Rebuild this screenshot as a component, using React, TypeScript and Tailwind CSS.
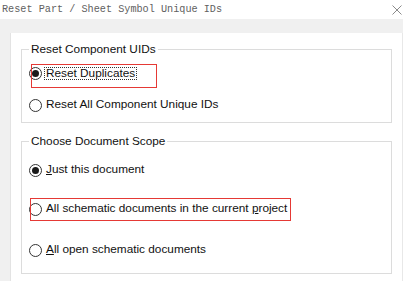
import React from "react";

type Opt = {
  label: React.ReactNode;
  checked?: boolean;
  focus?: boolean;
};

function Radio({ checked }: { checked?: boolean }) {
  return (
    <span className="flex items-center justify-center w-[13px] h-[13px] rounded-full border border-[#333333] bg-white shrink-0">
      {checked && <span className="w-[7px] h-[7px] rounded-full bg-[#1a1a1a]" />}
    </span>
  );
}

function Row({ label, checked, focus }: Opt) {
  return (
    <div className="flex items-center h-[20px] pl-[7px]">
      <Radio checked={checked} />
      {focus ? (
        <span className="ml-[2px] px-[1px] border border-dotted border-[#333333] leading-[11px]">
          {label}
        </span>
      ) : (
        <span className="ml-[4px]">{label}</span>
      )}
    </div>
  );
}

export default function App() {
  return (
    <div
      className="w-[403px] h-[281px] bg-white overflow-hidden flex flex-col text-[11.8px] text-[#111111]"
      style={{ fontFamily: '"Liberation Sans", Arial, sans-serif' }}
    >
      {/* Title bar */}
      <div className="h-[19px] flex items-center justify-between pl-[2px] pr-[1px] shrink-0">
        <span
          className="text-[10.2px] text-[#5f5f5f]"
          style={{ fontFamily: '"Liberation Mono", monospace' }}
        >
          Reset Part / Sheet Symbol Unique IDs
        </span>
        <svg width="10" height="10" viewBox="0 0 10 10" className="mt-[1px]">
          <path d="M0.5 0.5 L9.5 9.5 M9.5 0.5 L0.5 9.5" stroke="#8a8a8a" strokeWidth="1" fill="none" />
        </svg>
      </div>
      <div className="h-[14px] bg-[#f0f0f0] shrink-0" />

      <div className="flex flex-1">
        <div className="w-[11px] bg-[#f0f0f0] border-r border-[#e3e3e3]" />
        <div className="flex-1 pl-[10px] pr-[10px] border-r border-[#e8e8e8]">
          {/* Reset Component UIDs */}
          <fieldset className="mt-[8px] border border-[#dcdcdc] pb-[7px]">
            <legend className="ml-[7px] px-[2px] leading-[16px]">Reset Component UIDs</legend>
            <div className="relative mt-[6px]">
              <Row label="Reset Duplicates" checked focus />
              <div className="absolute left-[9px] top-[1px] w-[126px] h-[24px] border border-[#e53935]" />
            </div>
            <div className="mt-[12px]">
              <Row label="Reset All Component Unique IDs" />
            </div>
          </fieldset>

          {/* Choose Document Scope */}
          <fieldset className="mt-[10px] border border-[#dcdcdc] pb-[13px]">
            <legend className="ml-[7px] px-[2px] leading-[16px]">Choose Document Scope</legend>
            <div className="mt-[11px]">
              <Row
                label={
                  <>
                    <span className="underline">J</span>ust this document
                  </>
                }
                checked
              />
            </div>
            <div className="relative mt-[19px]">
              <Row
                label={
                  <>
                    All schematic documents in the current <span className="underline">p</span>roject
                  </>
                }
              />
              <div className="absolute left-[8px] top-[-1px] w-[261px] h-[23px] border border-[#e53935]" />
            </div>
            <div className="mt-[21px]">
              <Row
                label={
                  <>
                    <span className="underline">A</span>ll open schematic documents
                  </>
                }
              />
            </div>
          </fieldset>
        </div>
      </div>
    </div>
  );
}
